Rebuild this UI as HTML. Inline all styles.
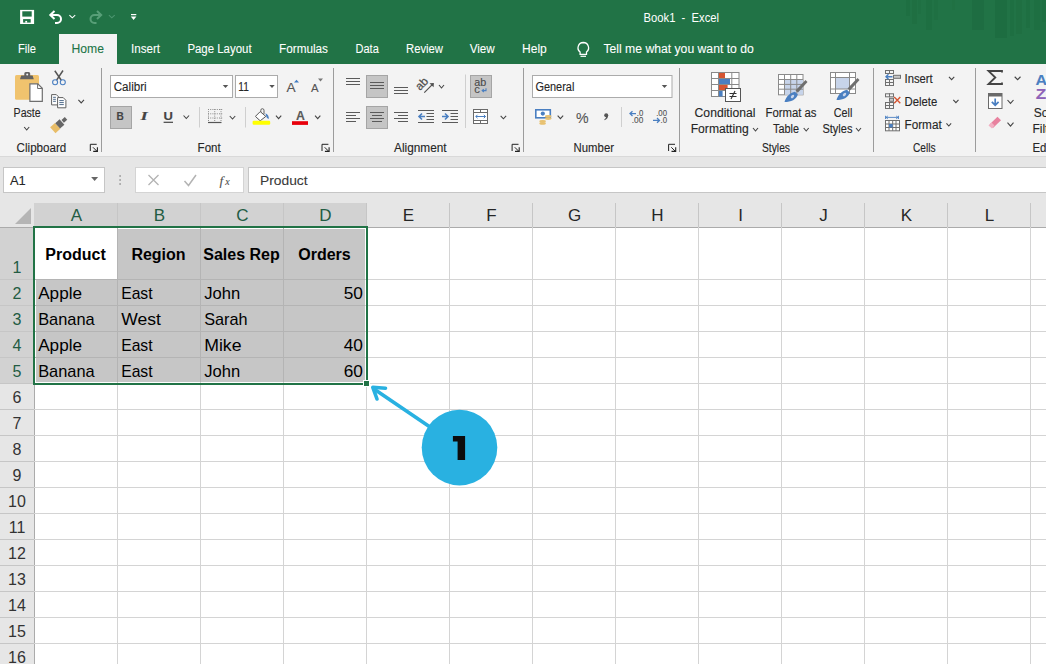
<!DOCTYPE html>
<html><head><meta charset="utf-8"><title>Book1 - Excel</title>
<style>
html,body{margin:0;padding:0;width:1046px;height:664px;overflow:hidden;background:#fff;font-family:"Liberation Sans",sans-serif;}
svg{display:block;}
</style></head>
<body><svg width="1046" height="664" viewBox="0 0 1046 664">
<rect x="0" y="0" width="1046" height="64" fill="#217346" />
<rect x="906" y="0" width="4" height="16" fill="#0d4f2a" opacity="0.1"/>
<rect x="912" y="0" width="5" height="24" fill="#0d4f2a" opacity="0.12"/>
<rect x="918" y="0" width="3" height="14" fill="#0d4f2a" opacity="0.08"/>
<rect x="926" y="0" width="6" height="30" fill="#0d4f2a" opacity="0.1"/>
<rect x="934" y="0" width="4" height="20" fill="#0d4f2a" opacity="0.08"/>
<rect x="952" y="0" width="3" height="10" fill="#0d4f2a" opacity="0.06"/>
<rect x="972" y="0" width="12" height="30" fill="#0d4f2a" opacity="0.14"/>
<rect x="995" y="0" width="12" height="38" fill="#0d4f2a" opacity="0.16"/>
<rect x="1010" y="0" width="4" height="36" fill="#0d4f2a" opacity="0.1"/>
<rect x="1016" y="0" width="6" height="34" fill="#0d4f2a" opacity="0.12"/>
<rect x="1026" y="0" width="4" height="28" fill="#0d4f2a" opacity="0.1"/>
<rect x="1034" y="0" width="6" height="30" fill="#0d4f2a" opacity="0.1"/>
<rect x="1042" y="0" width="4" height="22" fill="#0d4f2a" opacity="0.08"/>
<rect x="20.1" y="9.9" width="14" height="14.1" fill="#fff" />
<rect x="22.3" y="11.3" width="9.4" height="5.3" fill="#217346" />
<rect x="23.1" y="19.1" width="7.6" height="3.5" fill="#217346" />
<rect x="25.3" y="20.9" width="1.8" height="1.8" fill="#fff" />
<path d="M51,15 H57 A4,4 0 0 1 57,23 H55" fill="none" stroke="#fff" stroke-width="2" />
<path d="M54.5,11 L50.3,15 L54.5,19" fill="none" stroke="#fff" stroke-width="2" />
<path d="M69.39999999999999,15.15 L72.3,17.85 L75.2,15.15" fill="none" stroke="#fff" stroke-width="1.1" />
<path d="M100.5,15 H94.5 A4,4 0 0 0 94.5,23 H96.5" fill="none" stroke="#589f78" stroke-width="2" />
<path d="M97,11 L101.2,15 L97,19" fill="none" stroke="#589f78" stroke-width="2" />
<path d="M108.89999999999999,15.15 L111.8,17.85 L114.7,15.15" fill="none" stroke="#4d9670" stroke-width="1.1" />
<line x1="131" y1="14.6" x2="136.3" y2="14.6" stroke="#fff" stroke-width="1.2" />
<path d="M130.79999999999998,16.4 L136.4,16.4 L133.6,20.0 Z" fill="#fff" />
<text x="643.6" y="22.3" font-family="Liberation Sans" font-size="12" fill="#fff" textLength="75.4" lengthAdjust="spacingAndGlyphs" >Book1&#160;&#160;-&#160;&#160;Excel</text>
<rect x="59" y="34" width="58" height="31" fill="#f3f3f3" />
<text x="18" y="53" font-family="Liberation Sans" font-size="12" fill="#fff" stroke="#fff" stroke-width="0.08" textLength="18" lengthAdjust="spacingAndGlyphs" >File</text>
<text x="131" y="53" font-family="Liberation Sans" font-size="12" fill="#fff" stroke="#fff" stroke-width="0.08" textLength="29" lengthAdjust="spacingAndGlyphs" >Insert</text>
<text x="187.4" y="53" font-family="Liberation Sans" font-size="12" fill="#fff" stroke="#fff" stroke-width="0.08" textLength="64.2" lengthAdjust="spacingAndGlyphs" >Page Layout</text>
<text x="279" y="53" font-family="Liberation Sans" font-size="12" fill="#fff" stroke="#fff" stroke-width="0.08" textLength="49" lengthAdjust="spacingAndGlyphs" >Formulas</text>
<text x="355.5" y="53" font-family="Liberation Sans" font-size="12" fill="#fff" stroke="#fff" stroke-width="0.08" textLength="23.3" lengthAdjust="spacingAndGlyphs" >Data</text>
<text x="406" y="53" font-family="Liberation Sans" font-size="12" fill="#fff" stroke="#fff" stroke-width="0.08" textLength="37" lengthAdjust="spacingAndGlyphs" >Review</text>
<text x="469.7" y="53" font-family="Liberation Sans" font-size="12" fill="#fff" stroke="#fff" stroke-width="0.08" textLength="25.1" lengthAdjust="spacingAndGlyphs" >View</text>
<text x="522" y="53" font-family="Liberation Sans" font-size="12" fill="#fff" stroke="#fff" stroke-width="0.08" textLength="24.8" lengthAdjust="spacingAndGlyphs" >Help</text>
<text x="603.4" y="53" font-family="Liberation Sans" font-size="12" fill="#fff" stroke="#fff" stroke-width="0.08" textLength="150.4" lengthAdjust="spacingAndGlyphs" >Tell me what you want to do</text>
<text x="71.5" y="53" font-family="Liberation Sans" font-size="12" fill="#217346" stroke="#217346" stroke-width="0.08" textLength="32.5" lengthAdjust="spacingAndGlyphs" >Home</text>
<path d="M583.3,42.5 a5.3,5.3 0 0 0 -3.2,9.5 v2.4 h6.4 v-2.4 a5.3,5.3 0 0 0 -3.2,-9.5 z" fill="none" stroke="#fff" stroke-width="1.3" />
<line x1="580.5" y1="56.3" x2="586" y2="56.3" stroke="#fff" stroke-width="1.2" />
<rect x="0" y="64" width="1046" height="92" fill="#f3f3f3" />
<line x1="0" y1="156.5" x2="1046" y2="156.5" stroke="#d9d9d9" stroke-width="1" />
<line x1="101.5" y1="68" x2="101.5" y2="152" stroke="#9c9c9c" stroke-width="1" />
<line x1="333.5" y1="68" x2="333.5" y2="152" stroke="#9c9c9c" stroke-width="1" />
<line x1="523.5" y1="68" x2="523.5" y2="152" stroke="#9c9c9c" stroke-width="1" />
<line x1="679.5" y1="68" x2="679.5" y2="152" stroke="#9c9c9c" stroke-width="1" />
<line x1="873.5" y1="68" x2="873.5" y2="152" stroke="#9c9c9c" stroke-width="1" />
<line x1="975.5" y1="68" x2="975.5" y2="152" stroke="#9c9c9c" stroke-width="1" />
<text x="16.6" y="152" font-family="Liberation Sans" font-size="12" fill="#262626" stroke="#262626" stroke-width="0.12" textLength="49.7" lengthAdjust="spacingAndGlyphs" >Clipboard</text>
<text x="197.6" y="152" font-family="Liberation Sans" font-size="12" fill="#262626" stroke="#262626" stroke-width="0.12" textLength="23.1" lengthAdjust="spacingAndGlyphs" >Font</text>
<text x="394" y="152" font-family="Liberation Sans" font-size="12" fill="#262626" stroke="#262626" stroke-width="0.12" textLength="52.6" lengthAdjust="spacingAndGlyphs" >Alignment</text>
<text x="573.6" y="152" font-family="Liberation Sans" font-size="12" fill="#262626" stroke="#262626" stroke-width="0.12" textLength="40.4" lengthAdjust="spacingAndGlyphs" >Number</text>
<text x="762" y="152" font-family="Liberation Sans" font-size="12" fill="#262626" stroke="#262626" stroke-width="0.12" textLength="28" lengthAdjust="spacingAndGlyphs" >Styles</text>
<text x="913" y="152" font-family="Liberation Sans" font-size="12" fill="#262626" stroke="#262626" stroke-width="0.12" textLength="22.6" lengthAdjust="spacingAndGlyphs" >Cells</text>
<text x="1032.4" y="152" font-family="Liberation Sans" font-size="12" fill="#262626" stroke="#262626" stroke-width="0.12" textLength="14" lengthAdjust="spacingAndGlyphs" >Ed</text>
<path d="M90.3,151.0 V144.3 H96.7" fill="none" stroke="#222" stroke-width="1" />
<path d="M93,147.3 L97,151.3" fill="none" stroke="#222" stroke-width="1" />
<path d="M93.2,151.4 H97.4 V147.3" fill="none" stroke="#222" stroke-width="1.1" />
<path d="M322.0,151.0 V144.3 H328.4" fill="none" stroke="#222" stroke-width="1" />
<path d="M324.7,147.3 L328.7,151.3" fill="none" stroke="#222" stroke-width="1" />
<path d="M324.9,151.4 H329.09999999999997 V147.3" fill="none" stroke="#222" stroke-width="1.1" />
<path d="M512.1,151.0 V144.3 H518.5" fill="none" stroke="#222" stroke-width="1" />
<path d="M514.8,147.3 L518.8,151.3" fill="none" stroke="#222" stroke-width="1" />
<path d="M515.0,151.4 H519.2 V147.3" fill="none" stroke="#222" stroke-width="1.1" />
<path d="M668.5999999999999,151.0 V144.3 H675.0" fill="none" stroke="#222" stroke-width="1" />
<path d="M671.3,147.3 L675.3,151.3" fill="none" stroke="#222" stroke-width="1" />
<path d="M671.5,151.4 H675.6999999999999 V147.3" fill="none" stroke="#222" stroke-width="1.1" />
<path d="M16.5,75 H37.5 Q39,75 39,76.5 V99.7 H16.5 Q15,99.7 15,98.2 V76.5 Q15,75 16.5,75 Z" fill="#f0c36e" />
<path d="M20,79.2 L21.2,75.6 H24.3 V73.5 Q24.3,72 25.8,72 H28.7 Q30.2,72 30.2,73.5 V75.6 H32.6 L33.8,79.2 Z" fill="#626262" />
<circle cx="27.2" cy="74.6" r="1" fill="#f3f3f3"/>
<path d="M29.9,83.8 H37.8 L42.3,88.3 V101.3 H29.9 Z" fill="#fff" stroke="#6e6e6e" stroke-width="1.2" />
<path d="M37.6,83.8 V88.5 H42.3" fill="none" stroke="#6e6e6e" stroke-width="1" />
<text x="13.6" y="117" font-family="Liberation Sans" font-size="12" fill="#262626" stroke="#262626" stroke-width="0.12" textLength="27.1" lengthAdjust="spacingAndGlyphs" >Paste</text>
<path d="M24.2,127.0 L26.7,130.0 L29.2,127.0" fill="none" stroke="#444" stroke-width="1.1" />
<path d="M54.8,70.8 L61.3,80.2 M63,70.5 L56.6,80.2" fill="none" stroke="#555" stroke-width="1.5" />
<circle cx="55.1" cy="82.3" r="2.5" fill="none" stroke="#4a7fc1" stroke-width="1.1"/>
<circle cx="62.8" cy="82.3" r="2.5" fill="none" stroke="#4a7fc1" stroke-width="1.1"/>
<path d="M51.6,94.6 H56.3 L58.6,96.9 V104.9 H51.6 Z" fill="#fff" stroke="#606060" stroke-width="1" />
<line x1="53.1" y1="97.3" x2="55.9" y2="97.3" stroke="#4f6b8a" stroke-width="1" />
<line x1="53.1" y1="99.3" x2="55.9" y2="99.3" stroke="#4f6b8a" stroke-width="1" />
<line x1="53.1" y1="101.3" x2="55.9" y2="101.3" stroke="#4f6b8a" stroke-width="1" />
<path d="M57.6,97.6 H63.2 L65.9,100.3 V107.8 H57.6 Z" fill="#fff" stroke="#606060" stroke-width="1" />
<line x1="59.3" y1="100.6" x2="63.8" y2="100.6" stroke="#4f6b8a" stroke-width="1" />
<line x1="59.3" y1="102.6" x2="63.8" y2="102.6" stroke="#4f6b8a" stroke-width="1" />
<line x1="59.3" y1="104.6" x2="63.8" y2="104.6" stroke="#4f6b8a" stroke-width="1" />
<path d="M78.4,99.9 L81.2,102.9 L84.0,99.9" fill="none" stroke="#444" stroke-width="1.1" />
<g transform="translate(59.5 124.2) rotate(-42)">
<rect x="-9" y="-4" width="6.5" height="8" fill="#e8bd68" />
<rect x="-2.5" y="-3.6" width="5.8" height="7.2" fill="#666" />
<rect x="4.3" y="-1.8" width="4.5" height="3.6" fill="#666" />
</g>
<rect x="110.5" y="75.5" width="122" height="22" fill="#fff" stroke="#ababab" stroke-width="1" />
<text x="113.7" y="91" font-family="Liberation Sans" font-size="12" fill="#262626" stroke="#262626" stroke-width="0.12" textLength="33" lengthAdjust="spacingAndGlyphs" >Calibri</text>
<path d="M222.75,85.0 L228.25,85.0 L225.5,88.0 Z" fill="#555" />
<rect x="235.5" y="75.5" width="42" height="22" fill="#fff" stroke="#ababab" stroke-width="1" />
<text x="238.3" y="91" font-family="Liberation Sans" font-size="12" fill="#262626" stroke="#262626" stroke-width="0.12" textLength="10.6" lengthAdjust="spacingAndGlyphs" >11</text>
<path d="M269.25,85.0 L274.75,85.0 L272,88.0 Z" fill="#555" />
<text x="286.5" y="91.5" font-family="Liberation Sans" font-size="12.5" fill="#555" stroke="#555" stroke-width="0.12" textLength="9.1" lengthAdjust="spacingAndGlyphs" >A</text>
<path d="M294,82.5 L296.5,79.8 L299,82.5 Z" fill="#3f7cc4" />
<text x="311" y="91.5" font-family="Liberation Sans" font-size="10.5" fill="#555" stroke="#555" stroke-width="0.12" textLength="7.6" lengthAdjust="spacingAndGlyphs" >A</text>
<path d="M318,78.5 L323,78.5 L320.5,81.5 Z" fill="#777" />
<rect x="110.5" y="106.5" width="21" height="22" fill="#c5c5c5" stroke="#a5a5a5" stroke-width="1" />
<text x="116.6" y="120.4" font-family="Liberation Sans" font-size="11" fill="#444" stroke="#444" stroke-width="0.12" font-weight="bold" textLength="7.3" lengthAdjust="spacingAndGlyphs" >B</text>
<text x="140.5" y="120.4" font-family="Liberation Serif" font-size="12" fill="#444" stroke="#444" stroke-width="0.12" font-weight="bold" font-style="italic" textLength="7.2" lengthAdjust="spacingAndGlyphs" >I</text>
<text x="163.6" y="119.5" font-family="Liberation Sans" font-size="11" fill="#444" stroke="#444" stroke-width="0.12" font-weight="bold" textLength="9.4" lengthAdjust="spacingAndGlyphs" >U</text>
<line x1="163.6" y1="122.3" x2="173" y2="122.3" stroke="#444" stroke-width="1.2" />
<path d="M183.55,115.5 L186.3,118.5 L189.05,115.5" fill="none" stroke="#444" stroke-width="1.1" />
<line x1="199.5" y1="107" x2="199.5" y2="127.5" stroke="#cfcfcf" stroke-width="1" />
<rect x="208.0" y="109.0" width="1" height="1" fill="#8a8a8a" />
<rect x="210.2" y="109.0" width="1" height="1" fill="#8a8a8a" />
<rect x="212.4" y="109.0" width="1" height="1" fill="#8a8a8a" />
<rect x="214.6" y="109.0" width="1" height="1" fill="#8a8a8a" />
<rect x="216.8" y="109.0" width="1" height="1" fill="#8a8a8a" />
<rect x="219.0" y="109.0" width="1" height="1" fill="#8a8a8a" />
<rect x="221.2" y="109.0" width="1" height="1" fill="#8a8a8a" />
<rect x="208.0" y="113.3" width="1" height="1" fill="#8a8a8a" />
<rect x="210.2" y="113.3" width="1" height="1" fill="#8a8a8a" />
<rect x="212.4" y="113.3" width="1" height="1" fill="#8a8a8a" />
<rect x="214.6" y="113.3" width="1" height="1" fill="#8a8a8a" />
<rect x="216.8" y="113.3" width="1" height="1" fill="#8a8a8a" />
<rect x="219.0" y="113.3" width="1" height="1" fill="#8a8a8a" />
<rect x="221.2" y="113.3" width="1" height="1" fill="#8a8a8a" />
<rect x="208.0" y="117.5" width="1" height="1" fill="#8a8a8a" />
<rect x="210.2" y="117.5" width="1" height="1" fill="#8a8a8a" />
<rect x="212.4" y="117.5" width="1" height="1" fill="#8a8a8a" />
<rect x="214.6" y="117.5" width="1" height="1" fill="#8a8a8a" />
<rect x="216.8" y="117.5" width="1" height="1" fill="#8a8a8a" />
<rect x="219.0" y="117.5" width="1" height="1" fill="#8a8a8a" />
<rect x="221.2" y="117.5" width="1" height="1" fill="#8a8a8a" />
<rect x="208.0" y="109.0" width="1" height="1" fill="#8a8a8a" />
<rect x="208.0" y="111.2" width="1" height="1" fill="#8a8a8a" />
<rect x="208.0" y="113.4" width="1" height="1" fill="#8a8a8a" />
<rect x="208.0" y="115.6" width="1" height="1" fill="#8a8a8a" />
<rect x="208.0" y="117.8" width="1" height="1" fill="#8a8a8a" />
<rect x="208.0" y="120.0" width="1" height="1" fill="#8a8a8a" />
<rect x="214.2" y="109.0" width="1" height="1" fill="#8a8a8a" />
<rect x="214.2" y="111.2" width="1" height="1" fill="#8a8a8a" />
<rect x="214.2" y="113.4" width="1" height="1" fill="#8a8a8a" />
<rect x="214.2" y="115.6" width="1" height="1" fill="#8a8a8a" />
<rect x="214.2" y="117.8" width="1" height="1" fill="#8a8a8a" />
<rect x="214.2" y="120.0" width="1" height="1" fill="#8a8a8a" />
<rect x="220.5" y="109.0" width="1" height="1" fill="#8a8a8a" />
<rect x="220.5" y="111.2" width="1" height="1" fill="#8a8a8a" />
<rect x="220.5" y="113.4" width="1" height="1" fill="#8a8a8a" />
<rect x="220.5" y="115.6" width="1" height="1" fill="#8a8a8a" />
<rect x="220.5" y="117.8" width="1" height="1" fill="#8a8a8a" />
<rect x="220.5" y="120.0" width="1" height="1" fill="#8a8a8a" />
<line x1="208" y1="122.5" x2="221.5" y2="122.5" stroke="#555" stroke-width="1.2" />
<path d="M229.75,116.0 L232.5,119.0 L235.25,116.0" fill="none" stroke="#444" stroke-width="1.1" />
<line x1="245.5" y1="107" x2="245.5" y2="127.5" stroke="#cfcfcf" stroke-width="1" />
<path d="M260.8,113.8 V110.3 a1.6,1.6 0 0 1 3.2,0 V114" fill="none" stroke="#606060" stroke-width="1" />
<path d="M255.4,116.4 L260.2,111.6 L265.8,116.4 L260.2,120.8 Z" fill="#fff" stroke="#555" stroke-width="1" />
<path d="M265.4,113.2 q3.8,1.8 3.4,5.8 q-2.4,-0.6 -2.6,-2.8 z" fill="#4a7fc1" />
<rect x="252.6" y="120.8" width="17.6" height="3.9" fill="#ffff00" rx="1.2"/>
<path d="M275.95000000000005,115.7 L278.6,118.7 L281.25,115.7" fill="none" stroke="#444" stroke-width="1.1" />
<text x="295.9" y="120.4" font-family="Liberation Sans" font-size="13" fill="#5a5a5a" stroke="#5a5a5a" stroke-width="0.12" font-weight="bold" textLength="8.9" lengthAdjust="spacingAndGlyphs" >A</text>
<rect x="292" y="121.2" width="16" height="3.7" fill="#e8000b" />
<path d="M315.05,115.7 L317.7,118.7 L320.34999999999997,115.7" fill="none" stroke="#444" stroke-width="1.1" />
<line x1="346" y1="78.5" x2="360" y2="78.5" stroke="#5a5a5a" stroke-width="1" />
<line x1="346" y1="81.5" x2="360" y2="81.5" stroke="#5a5a5a" stroke-width="1" />
<line x1="346" y1="84.5" x2="360" y2="84.5" stroke="#5a5a5a" stroke-width="1" />
<rect x="366.5" y="75.5" width="21" height="22" fill="#c5c5c5" stroke="#a5a5a5" stroke-width="1" />
<line x1="370" y1="82.5" x2="384" y2="82.5" stroke="#5a5a5a" stroke-width="1" />
<line x1="370" y1="85.5" x2="384" y2="85.5" stroke="#5a5a5a" stroke-width="1" />
<line x1="370" y1="88.5" x2="384" y2="88.5" stroke="#5a5a5a" stroke-width="1" />
<line x1="394" y1="87.5" x2="408" y2="87.5" stroke="#5a5a5a" stroke-width="1" />
<line x1="394" y1="90.5" x2="408" y2="90.5" stroke="#5a5a5a" stroke-width="1" />
<line x1="394" y1="93.5" x2="408" y2="93.5" stroke="#5a5a5a" stroke-width="1" />
<text x="-6.5" y="0" font-family="Liberation Sans" font-size="11.5" fill="#505050" transform="translate(424.6 86.4) rotate(-46)" stroke="#505050" stroke-width="0.25">ab</text>
<path d="M424.3,92.6 L432,84.9" fill="none" stroke="#505050" stroke-width="1.2" />
<path d="M429.5,83.2 L433.9,82.9 L433.6,87.3 Z" fill="#505050" />
<path d="M439.0,85.0 L441.5,88.0 L444.0,85.0" fill="none" stroke="#444" stroke-width="1.1" />
<line x1="465.5" y1="74.5" x2="465.5" y2="128" stroke="#cfcfcf" stroke-width="1" />
<rect x="470.5" y="75.5" width="21" height="22" fill="#c5c5c5" stroke="#a5a5a5" stroke-width="1" />
<text x="474.3" y="85.6" font-family="Liberation Sans" font-size="10.5" fill="#4a4a4a" stroke="#4a4a4a" stroke-width="0.12" textLength="12" lengthAdjust="spacingAndGlyphs" >ab</text>
<text x="474.3" y="93.2" font-family="Liberation Sans" font-size="10.5" fill="#4a4a4a" stroke="#4a4a4a" stroke-width="0.12" textLength="5.6" lengthAdjust="spacingAndGlyphs" >c</text>
<path d="M486,88.3 V90.6 H482.3 M483.8,89.2 L482.2,90.6 L483.8,92" fill="none" stroke="#4a7fc1" stroke-width="1.1" />
<line x1="346" y1="112.5" x2="360" y2="112.5" stroke="#5a5a5a" stroke-width="1" />
<line x1="346" y1="115.5" x2="356" y2="115.5" stroke="#5a5a5a" stroke-width="1" />
<line x1="346" y1="118.5" x2="360" y2="118.5" stroke="#5a5a5a" stroke-width="1" />
<line x1="346" y1="121.5" x2="356" y2="121.5" stroke="#5a5a5a" stroke-width="1" />
<rect x="366.5" y="106.5" width="21" height="22" fill="#c5c5c5" stroke="#a5a5a5" stroke-width="1" />
<line x1="370" y1="112.5" x2="384" y2="112.5" stroke="#5a5a5a" stroke-width="1" />
<line x1="372" y1="115.5" x2="382" y2="115.5" stroke="#5a5a5a" stroke-width="1" />
<line x1="370" y1="118.5" x2="384" y2="118.5" stroke="#5a5a5a" stroke-width="1" />
<line x1="372" y1="121.5" x2="382" y2="121.5" stroke="#5a5a5a" stroke-width="1" />
<line x1="394" y1="112.5" x2="408" y2="112.5" stroke="#5a5a5a" stroke-width="1" />
<line x1="398" y1="115.5" x2="408" y2="115.5" stroke="#5a5a5a" stroke-width="1" />
<line x1="394" y1="118.5" x2="408" y2="118.5" stroke="#5a5a5a" stroke-width="1" />
<line x1="398" y1="121.5" x2="408" y2="121.5" stroke="#5a5a5a" stroke-width="1" />
<line x1="418" y1="110.5" x2="434" y2="110.5" stroke="#5a5a5a" stroke-width="1" />
<line x1="426.5" y1="113.5" x2="434" y2="113.5" stroke="#5a5a5a" stroke-width="1" />
<line x1="426.5" y1="116.5" x2="434" y2="116.5" stroke="#5a5a5a" stroke-width="1" />
<line x1="426.5" y1="119.5" x2="434" y2="119.5" stroke="#5a5a5a" stroke-width="1" />
<line x1="418" y1="122.5" x2="434" y2="122.5" stroke="#5a5a5a" stroke-width="1" />
<path d="M425,116.5 H419 M422,113.5 L419,116.5 L422,119.5" fill="none" stroke="#4a7fc1" stroke-width="1.6" />
<line x1="442" y1="110.5" x2="458" y2="110.5" stroke="#5a5a5a" stroke-width="1" />
<line x1="450.5" y1="113.5" x2="458" y2="113.5" stroke="#5a5a5a" stroke-width="1" />
<line x1="450.5" y1="116.5" x2="458" y2="116.5" stroke="#5a5a5a" stroke-width="1" />
<line x1="450.5" y1="119.5" x2="458" y2="119.5" stroke="#5a5a5a" stroke-width="1" />
<line x1="442" y1="122.5" x2="458" y2="122.5" stroke="#5a5a5a" stroke-width="1" />
<path d="M442,116.5 H448 M445,113.5 L448,116.5 L445,119.5" fill="none" stroke="#4a7fc1" stroke-width="1.6" />
<rect x="473.5" y="109.5" width="14" height="14" fill="#fff" stroke="#6a6a6a" stroke-width="1" />
<line x1="473.5" y1="112.5" x2="487.5" y2="112.5" stroke="#6a6a6a" stroke-width="1" />
<line x1="473.5" y1="120.5" x2="487.5" y2="120.5" stroke="#6a6a6a" stroke-width="1" />
<line x1="480.5" y1="109.5" x2="480.5" y2="112.5" stroke="#6a6a6a" stroke-width="1" />
<line x1="480.5" y1="120.5" x2="480.5" y2="123.5" stroke="#6a6a6a" stroke-width="1" />
<path d="M475.8,116.5 H485.5 M477.5,114.8 L475.8,116.5 L477.5,118.2 M483.8,114.8 L485.5,116.5 L483.8,118.2" fill="none" stroke="#4a7fc1" stroke-width="1" />
<path d="M500.65,115.8 L503.4,118.8 L506.15,115.8" fill="none" stroke="#444" stroke-width="1.1" />
<rect x="532.5" y="75.5" width="139.5" height="22" fill="#fff" stroke="#ababab" stroke-width="1" />
<text x="535.4" y="90.8" font-family="Liberation Sans" font-size="12" fill="#262626" stroke="#262626" stroke-width="0.12" textLength="39" lengthAdjust="spacingAndGlyphs" >General</text>
<path d="M661.75,85.0 L667.25,85.0 L664.5,88.0 Z" fill="#555" />
<rect x="535.8" y="109.8" width="14.5" height="8" fill="#fff" stroke="#4a7fc1" stroke-width="1.6" />
<circle cx="542.8" cy="113.6" r="2.1" fill="#4a7fc1"/>
<ellipse cx="548.2" cy="116.3" rx="3.3" ry="1.3" fill="#e8c170"/>
<ellipse cx="548.2" cy="118.6" rx="3.3" ry="1.3" fill="#e8c170"/>
<ellipse cx="542.6" cy="121.3" rx="3.3" ry="1.3" fill="#e8c170"/>
<ellipse cx="542.6" cy="123.4" rx="3.3" ry="1.3" fill="#e8c170"/>
<path d="M557.65,115.7 L560.4,118.7 L563.15,115.7" fill="none" stroke="#444" stroke-width="1.1" />
<text x="576" y="123" font-family="Liberation Sans" font-size="15.5" fill="#555" stroke="#555" stroke-width="0.12" textLength="12.6" lengthAdjust="spacingAndGlyphs" >%</text>
<circle cx="606.2" cy="115.3" r="2" fill="#555"/>
<path d="M607.9,115.6 Q608.4,118.6 604.6,120.2 L604.3,119.5 Q606.3,118.3 606.2,116.6 Z" fill="#555" />
<line x1="621.5" y1="107" x2="621.5" y2="127" stroke="#cfcfcf" stroke-width="1" />
<text x="636.8" y="115.8" font-family="Liberation Sans" font-size="8.5" fill="#555" stroke="#555" stroke-width="0.12" textLength="6.5" lengthAdjust="spacingAndGlyphs" >.0</text>
<text x="631.8" y="123" font-family="Liberation Sans" font-size="8.5" fill="#555" stroke="#555" stroke-width="0.12" textLength="11.5" lengthAdjust="spacingAndGlyphs" >.00</text>
<path d="M636,113.6 H630 M632.5,111.2 L630,113.6 L632.5,116" fill="none" stroke="#4a7fc1" stroke-width="1.3" />
<text x="656.2" y="115.8" font-family="Liberation Sans" font-size="8.5" fill="#555" stroke="#555" stroke-width="0.12" textLength="10.8" lengthAdjust="spacingAndGlyphs" >.00</text>
<text x="660.5" y="123" font-family="Liberation Sans" font-size="8.5" fill="#555" stroke="#555" stroke-width="0.12" textLength="6.5" lengthAdjust="spacingAndGlyphs" >.0</text>
<path d="M653,120.4 H659.5 M657,118 L659.5,120.4 L657,122.8" fill="none" stroke="#4a7fc1" stroke-width="1.3" />
<rect x="711.5" y="72.5" width="27.5" height="24" fill="#fff" stroke="#8a8a8a" stroke-width="1" />
<line x1="711.5" y1="78.5" x2="739" y2="78.5" stroke="#8a8a8a" stroke-width="1" />
<line x1="711.5" y1="84.5" x2="739" y2="84.5" stroke="#8a8a8a" stroke-width="1" />
<line x1="711.5" y1="90.5" x2="739" y2="90.5" stroke="#8a8a8a" stroke-width="1" />
<line x1="718.5" y1="72.5" x2="718.5" y2="96.5" stroke="#8a8a8a" stroke-width="1" />
<line x1="731.8" y1="72.5" x2="731.8" y2="96.5" stroke="#8a8a8a" stroke-width="1" />
<rect x="719" y="73" width="6" height="5" fill="#d65532" />
<rect x="719" y="79" width="11" height="5" fill="#4a7fc1" />
<rect x="719" y="85" width="8.6" height="5" fill="#d65532" />
<rect x="719" y="91" width="3.6" height="5.5" fill="#4a7fc1" />
<rect x="725.5" y="88.5" width="15" height="13" fill="#fff" stroke="#555" stroke-width="1" />
<path d="M729.5,93.5 H736.5 M729.5,96.5 H736.5 M735,91 L731,99" fill="none" stroke="#333" stroke-width="1.1" />
<text x="694.6" y="117" font-family="Liberation Sans" font-size="12" fill="#262626" stroke="#262626" stroke-width="0.12" textLength="60.8" lengthAdjust="spacingAndGlyphs" >Conditional</text>
<text x="690.7" y="133" font-family="Liberation Sans" font-size="12" fill="#262626" stroke="#262626" stroke-width="0.12" textLength="58" lengthAdjust="spacingAndGlyphs" >Formatting</text>
<path d="M753.0,128.0 L755.5,131.0 L758.0,128.0" fill="none" stroke="#444" stroke-width="1.1" />
<rect x="778.5" y="74.5" width="24.5" height="20.3" fill="#fff" stroke="#8a8a8a" stroke-width="1" />
<rect x="784.5" y="79.5" width="18.5" height="15.3" fill="#c7d4ea" />
<line x1="778.5" y1="79.5" x2="803" y2="79.5" stroke="#8a8a8a" stroke-width="1" />
<line x1="778.5" y1="84.4" x2="803" y2="84.4" stroke="#8a8a8a" stroke-width="1" />
<line x1="778.5" y1="89.2" x2="803" y2="89.2" stroke="#8a8a8a" stroke-width="1" />
<line x1="784.5" y1="74.5" x2="784.5" y2="94.8" stroke="#8a8a8a" stroke-width="1" />
<line x1="790.7" y1="74.5" x2="790.7" y2="94.8" stroke="#8a8a8a" stroke-width="1" />
<line x1="796.8" y1="74.5" x2="796.8" y2="94.8" stroke="#8a8a8a" stroke-width="1" />
<path d="M795.5,90.5 L805.5,80 L807.5,82 L798,92.5 Z" fill="#6e6e6e" />
<path d="M784.5,102 C786,96.5 790,92.8 795,91.8 L797.8,94.5 C796.5,99.5 791,102 784.5,102 Z" fill="#4a7fc1" />
<ellipse cx="792.5" cy="96.5" rx="1.3" ry="2" fill="#c7d4ea" transform="rotate(45 792.5 96.5)"/>
<text x="765.5" y="117" font-family="Liberation Sans" font-size="12" fill="#262626" stroke="#262626" stroke-width="0.12" textLength="51" lengthAdjust="spacingAndGlyphs" >Format as</text>
<text x="773" y="133" font-family="Liberation Sans" font-size="12" fill="#262626" stroke="#262626" stroke-width="0.12" textLength="26" lengthAdjust="spacingAndGlyphs" >Table</text>
<path d="M803.7,128.0 L806.2,131.0 L808.7,128.0" fill="none" stroke="#444" stroke-width="1.1" />
<rect x="830.5" y="72.5" width="25" height="21" fill="#fff" stroke="#8a8a8a" stroke-width="1" />
<rect x="835.5" y="77.5" width="14" height="11.5" fill="#c7d4ea" />
<line x1="830.5" y1="77.5" x2="855.5" y2="77.5" stroke="#8a8a8a" stroke-width="1" />
<line x1="830.5" y1="89" x2="855.5" y2="89" stroke="#8a8a8a" stroke-width="1" />
<line x1="835.5" y1="72.5" x2="835.5" y2="93.5" stroke="#8a8a8a" stroke-width="1" />
<line x1="849.5" y1="72.5" x2="849.5" y2="93.5" stroke="#8a8a8a" stroke-width="1" />
<path d="M847.5,88.5 L857.5,78 L859.5,80 L850,90.5 Z" fill="#6e6e6e" />
<path d="M836.5,100 C838,94.5 842,90.8 847,89.8 L849.8,92.5 C848.5,97.5 843,100 836.5,100 Z" fill="#4a7fc1" />
<ellipse cx="844.5" cy="94.5" rx="1.3" ry="2" fill="#c7d4ea" transform="rotate(45 844.5 94.5)"/>
<text x="833.8" y="117" font-family="Liberation Sans" font-size="12" fill="#262626" stroke="#262626" stroke-width="0.12" textLength="18.6" lengthAdjust="spacingAndGlyphs" >Cell</text>
<text x="822.4" y="133" font-family="Liberation Sans" font-size="12" fill="#262626" stroke="#262626" stroke-width="0.12" textLength="30" lengthAdjust="spacingAndGlyphs" >Styles</text>
<path d="M856.0,128.0 L858.5,131.0 L861.0,128.0" fill="none" stroke="#444" stroke-width="1.1" />
<rect x="885.5" y="70.5" width="4" height="3" fill="none" stroke="#707070" stroke-width="1" />
<rect x="889.5" y="70.5" width="4" height="3" fill="none" stroke="#707070" stroke-width="1" />
<rect x="885.5" y="79.5" width="4" height="3" fill="none" stroke="#707070" stroke-width="1" />
<rect x="889.5" y="79.5" width="4" height="3" fill="none" stroke="#707070" stroke-width="1" />
<rect x="885.5" y="82.5" width="4" height="3" fill="none" stroke="#707070" stroke-width="1" />
<rect x="889.5" y="82.5" width="4" height="3" fill="none" stroke="#707070" stroke-width="1" />
<rect x="893.5" y="75.3" width="7" height="3" fill="#c8c8c8" stroke="#707070" stroke-width="1" />
<path d="M892.5,76.8 H886 M888.5,74.3 L886,76.8 L888.5,79.3" fill="none" stroke="#4a7fc1" stroke-width="1.4" />
<text x="904.5" y="82.9" font-family="Liberation Sans" font-size="12" fill="#262626" stroke="#262626" stroke-width="0.12" textLength="28.2" lengthAdjust="spacingAndGlyphs" >Insert</text>
<path d="M948.95,76.95 L951.6,79.64999999999999 L954.25,76.95" fill="none" stroke="#444" stroke-width="1.1" />
<rect x="885.5" y="93.8" width="4" height="3" fill="none" stroke="#707070" stroke-width="1" />
<rect x="889.5" y="93.8" width="4" height="3" fill="none" stroke="#707070" stroke-width="1" />
<rect x="889.5" y="98.3" width="4" height="3" fill="#c8c8c8" stroke="#707070" stroke-width="1" />
<rect x="885.5" y="102.5" width="4" height="3" fill="none" stroke="#707070" stroke-width="1" />
<rect x="889.5" y="102.5" width="4" height="3" fill="none" stroke="#707070" stroke-width="1" />
<rect x="885.5" y="105.5" width="4" height="3" fill="none" stroke="#707070" stroke-width="1" />
<rect x="889.5" y="105.5" width="4" height="3" fill="none" stroke="#707070" stroke-width="1" />
<path d="M894.2,97 L900.3,103.2 M900.3,97 L894.2,103.2" fill="none" stroke="#d65532" stroke-width="1.4" />
<text x="904.5" y="105.5" font-family="Liberation Sans" font-size="12" fill="#262626" stroke="#262626" stroke-width="0.12" textLength="32.8" lengthAdjust="spacingAndGlyphs" >Delete</text>
<path d="M953.3,99.89999999999999 L955.9,102.7 L958.5,99.89999999999999" fill="none" stroke="#444" stroke-width="1.1" />
<rect x="885.5" y="120.5" width="14" height="10.3" fill="#fff" stroke="#707070" stroke-width="1" />
<line x1="885.5" y1="124" x2="899.5" y2="124" stroke="#707070" stroke-width="1" />
<line x1="885.5" y1="127.5" x2="899.5" y2="127.5" stroke="#707070" stroke-width="1" />
<line x1="889" y1="120.5" x2="889" y2="130.8" stroke="#707070" stroke-width="1" />
<line x1="892.7" y1="120.5" x2="892.7" y2="130.8" stroke="#707070" stroke-width="1" />
<line x1="896" y1="120.5" x2="896" y2="130.8" stroke="#707070" stroke-width="1" />
<rect x="889" y="124" width="3.7" height="3.5" fill="#4a7fc1" />
<path d="M886,117.4 H898 M887.8,116 L886,117.4 L887.8,118.8 M896.2,116 L898,117.4 L896.2,118.8 M885.5,115.8 V119 M898.5,115.8 V119" fill="none" stroke="#4a7fc1" stroke-width="0.9" />
<text x="904.5" y="128.5" font-family="Liberation Sans" font-size="12" fill="#262626" stroke="#262626" stroke-width="0.12" textLength="37.2" lengthAdjust="spacingAndGlyphs" >Format</text>
<path d="M946.4499999999999,123.4 L948.8,126.0 L951.15,123.4" fill="none" stroke="#444" stroke-width="1.1" />
<path d="M1002,72.5 V71 H988.5 L995.3,77.5 L988.5,84 H1002 V82.5" fill="none" stroke="#444" stroke-width="1.8" stroke-linejoin="miter"/>
<path d="M1014.7,76.75 L1017.6,79.65 L1020.5,76.75" fill="none" stroke="#444" stroke-width="1.1" />
<rect x="988.5" y="93.5" width="13.5" height="15" fill="#fff" stroke="#6a6a6a" stroke-width="1" />
<rect x="988.5" y="93.5" width="13.5" height="3" fill="#6a6a6a" />
<path d="M995.2,98.5 V105 M991.8,101.8 L995.2,105.2 L998.6,101.8" fill="none" stroke="#4a7fc1" stroke-width="1.7" />
<path d="M1007.5,100.0 L1010.5,103.4 L1013.5,100.0" fill="none" stroke="#444" stroke-width="1.1" />
<path d="M989.5,124.5 L997.5,116.8 L1001,120.3 L993,128 Z" fill="#e8829f" />
<path d="M988.5,125.5 L991.5,122.5 L994.5,125.5 L992,128.5 Z" fill="#f2b0c3" />
<path d="M1007.5,122.7 L1010.5,126.10000000000001 L1013.5,122.7" fill="none" stroke="#444" stroke-width="1.1" />
<text x="1035.4" y="85" font-family="Liberation Sans" font-size="15" fill="#4a7fc1" stroke="#4a7fc1" stroke-width="0.12" font-weight="bold" textLength="11.5" lengthAdjust="spacingAndGlyphs" >A</text>
<text x="1035.8" y="98.7" font-family="Liberation Sans" font-size="15" fill="#8e62b8" stroke="#8e62b8" stroke-width="0.12" font-weight="bold" textLength="10.5" lengthAdjust="spacingAndGlyphs" >Z</text>
<text x="1033.8" y="116.8" font-family="Liberation Sans" font-size="12" fill="#262626" stroke="#262626" stroke-width="0.12" >So</text>
<text x="1032.4" y="132.7" font-family="Liberation Sans" font-size="12" fill="#262626" stroke="#262626" stroke-width="0.12" >Filt</text>
<rect x="0" y="157" width="1046" height="46" fill="#e6e6e6" />
<rect x="3.5" y="167.5" width="101" height="25" fill="#fff" stroke="#c6c6c6" stroke-width="1" />
<text x="10" y="184.8" font-family="Liberation Sans" font-size="12.5" fill="#262626" stroke="#262626" stroke-width="0.1" textLength="15.8" lengthAdjust="spacingAndGlyphs" >A1</text>
<path d="M91.1,177.0 L98.1,177.0 L94.6,181.0 Z" fill="#666" />
<rect x="119.3" y="175.2" width="1.6" height="1.6" fill="#999" />
<rect x="119.3" y="179.2" width="1.6" height="1.6" fill="#999" />
<rect x="119.3" y="183.2" width="1.6" height="1.6" fill="#999" />
<rect x="135.5" y="167.5" width="108" height="25" fill="#fff" stroke="#d4d4d4" stroke-width="1" />
<path d="M148.5,175 L158.5,185 M158.5,175 L148.5,185" fill="none" stroke="#b3b3b3" stroke-width="1.3" />
<path d="M184.5,181 L188.5,185.5 L196,175" fill="none" stroke="#b3b3b3" stroke-width="1.5" />
<text x="219.5" y="185" font-family="Liberation Serif" font-size="13.5" fill="#505050" stroke="#505050" stroke-width="0.1" font-style="italic" >f</text>
<text x="225.2" y="185" font-family="Liberation Serif" font-size="10" fill="#505050" stroke="#505050" stroke-width="0.1" font-style="italic" >x</text>
<rect x="248.5" y="167.5" width="800" height="25" fill="#fff" stroke="#c6c6c6" stroke-width="1" />
<text x="260" y="184.8" font-family="Liberation Sans" font-size="12.5" fill="#3a3a3a" stroke="#3a3a3a" stroke-width="0.1" textLength="47.6" lengthAdjust="spacingAndGlyphs" >Product</text>
<rect x="0" y="203" width="1046" height="24" fill="#e6e6e6" />
<rect x="34" y="203" width="332" height="24" fill="#d2d2d2" />
<rect x="0" y="227" width="34" height="437" fill="#e6e6e6" />
<rect x="0" y="227" width="34" height="156" fill="#d2d2d2" />
<path d="M31,208 L31,224 L15,224 Z" fill="#b5b5b5" />
<rect x="34" y="227" width="1012" height="437" fill="#fff" />
<line x1="117.5" y1="203" x2="117.5" y2="227" stroke="#c6c6c6" stroke-width="1" />
<line x1="200.5" y1="203" x2="200.5" y2="227" stroke="#c6c6c6" stroke-width="1" />
<line x1="283.5" y1="203" x2="283.5" y2="227" stroke="#c6c6c6" stroke-width="1" />
<line x1="366.5" y1="203" x2="366.5" y2="227" stroke="#c6c6c6" stroke-width="1" />
<line x1="449.5" y1="203" x2="449.5" y2="227" stroke="#c6c6c6" stroke-width="1" />
<line x1="532.5" y1="203" x2="532.5" y2="227" stroke="#c6c6c6" stroke-width="1" />
<line x1="615.5" y1="203" x2="615.5" y2="227" stroke="#c6c6c6" stroke-width="1" />
<line x1="698.5" y1="203" x2="698.5" y2="227" stroke="#c6c6c6" stroke-width="1" />
<line x1="781.5" y1="203" x2="781.5" y2="227" stroke="#c6c6c6" stroke-width="1" />
<line x1="864.5" y1="203" x2="864.5" y2="227" stroke="#c6c6c6" stroke-width="1" />
<line x1="947.5" y1="203" x2="947.5" y2="227" stroke="#c6c6c6" stroke-width="1" />
<line x1="1030.5" y1="203" x2="1030.5" y2="227" stroke="#c6c6c6" stroke-width="1" />
<line x1="0" y1="227.5" x2="1046" y2="227.5" stroke="#ababab" stroke-width="1" />
<line x1="0" y1="279.5" x2="34" y2="279.5" stroke="#c6c6c6" stroke-width="1" />
<line x1="0" y1="305.5" x2="34" y2="305.5" stroke="#c6c6c6" stroke-width="1" />
<line x1="0" y1="331.5" x2="34" y2="331.5" stroke="#c6c6c6" stroke-width="1" />
<line x1="0" y1="357.5" x2="34" y2="357.5" stroke="#c6c6c6" stroke-width="1" />
<line x1="0" y1="383.5" x2="34" y2="383.5" stroke="#c6c6c6" stroke-width="1" />
<line x1="0" y1="409.5" x2="34" y2="409.5" stroke="#c6c6c6" stroke-width="1" />
<line x1="0" y1="435.5" x2="34" y2="435.5" stroke="#c6c6c6" stroke-width="1" />
<line x1="0" y1="461.5" x2="34" y2="461.5" stroke="#c6c6c6" stroke-width="1" />
<line x1="0" y1="487.5" x2="34" y2="487.5" stroke="#c6c6c6" stroke-width="1" />
<line x1="0" y1="513.5" x2="34" y2="513.5" stroke="#c6c6c6" stroke-width="1" />
<line x1="0" y1="539.5" x2="34" y2="539.5" stroke="#c6c6c6" stroke-width="1" />
<line x1="0" y1="565.5" x2="34" y2="565.5" stroke="#c6c6c6" stroke-width="1" />
<line x1="0" y1="591.5" x2="34" y2="591.5" stroke="#c6c6c6" stroke-width="1" />
<line x1="0" y1="617.5" x2="34" y2="617.5" stroke="#c6c6c6" stroke-width="1" />
<line x1="0" y1="643.5" x2="34" y2="643.5" stroke="#c6c6c6" stroke-width="1" />
<line x1="0" y1="669.5" x2="34" y2="669.5" stroke="#c6c6c6" stroke-width="1" />
<line x1="34.5" y1="227" x2="34.5" y2="664" stroke="#ababab" stroke-width="1" />
<rect x="36" y="229" width="329" height="153" fill="#c6c6c6" />
<rect x="35" y="228" width="82" height="51" fill="#fff" />
<line x1="117.5" y1="227" x2="117.5" y2="664" stroke="#d4d4d4" stroke-width="1" />
<line x1="200.5" y1="227" x2="200.5" y2="664" stroke="#d4d4d4" stroke-width="1" />
<line x1="283.5" y1="227" x2="283.5" y2="664" stroke="#d4d4d4" stroke-width="1" />
<line x1="366.5" y1="227" x2="366.5" y2="664" stroke="#d4d4d4" stroke-width="1" />
<line x1="449.5" y1="227" x2="449.5" y2="664" stroke="#d4d4d4" stroke-width="1" />
<line x1="532.5" y1="227" x2="532.5" y2="664" stroke="#d4d4d4" stroke-width="1" />
<line x1="615.5" y1="227" x2="615.5" y2="664" stroke="#d4d4d4" stroke-width="1" />
<line x1="698.5" y1="227" x2="698.5" y2="664" stroke="#d4d4d4" stroke-width="1" />
<line x1="781.5" y1="227" x2="781.5" y2="664" stroke="#d4d4d4" stroke-width="1" />
<line x1="864.5" y1="227" x2="864.5" y2="664" stroke="#d4d4d4" stroke-width="1" />
<line x1="947.5" y1="227" x2="947.5" y2="664" stroke="#d4d4d4" stroke-width="1" />
<line x1="1030.5" y1="227" x2="1030.5" y2="664" stroke="#d4d4d4" stroke-width="1" />
<line x1="34" y1="279.5" x2="1046" y2="279.5" stroke="#d4d4d4" stroke-width="1" />
<line x1="34" y1="305.5" x2="1046" y2="305.5" stroke="#d4d4d4" stroke-width="1" />
<line x1="34" y1="331.5" x2="1046" y2="331.5" stroke="#d4d4d4" stroke-width="1" />
<line x1="34" y1="357.5" x2="1046" y2="357.5" stroke="#d4d4d4" stroke-width="1" />
<line x1="34" y1="383.5" x2="1046" y2="383.5" stroke="#d4d4d4" stroke-width="1" />
<line x1="34" y1="409.5" x2="1046" y2="409.5" stroke="#d4d4d4" stroke-width="1" />
<line x1="34" y1="435.5" x2="1046" y2="435.5" stroke="#d4d4d4" stroke-width="1" />
<line x1="34" y1="461.5" x2="1046" y2="461.5" stroke="#d4d4d4" stroke-width="1" />
<line x1="34" y1="487.5" x2="1046" y2="487.5" stroke="#d4d4d4" stroke-width="1" />
<line x1="34" y1="513.5" x2="1046" y2="513.5" stroke="#d4d4d4" stroke-width="1" />
<line x1="34" y1="539.5" x2="1046" y2="539.5" stroke="#d4d4d4" stroke-width="1" />
<line x1="34" y1="565.5" x2="1046" y2="565.5" stroke="#d4d4d4" stroke-width="1" />
<line x1="34" y1="591.5" x2="1046" y2="591.5" stroke="#d4d4d4" stroke-width="1" />
<line x1="34" y1="617.5" x2="1046" y2="617.5" stroke="#d4d4d4" stroke-width="1" />
<line x1="34" y1="643.5" x2="1046" y2="643.5" stroke="#d4d4d4" stroke-width="1" />
<line x1="34" y1="669.5" x2="1046" y2="669.5" stroke="#d4d4d4" stroke-width="1" />
<line x1="117.5" y1="228" x2="117.5" y2="382" stroke="#b4b4b4" stroke-width="1" />
<line x1="200.5" y1="228" x2="200.5" y2="382" stroke="#b4b4b4" stroke-width="1" />
<line x1="283.5" y1="228" x2="283.5" y2="382" stroke="#b4b4b4" stroke-width="1" />
<line x1="35" y1="279.5" x2="365" y2="279.5" stroke="#b4b4b4" stroke-width="1" />
<line x1="35" y1="305.5" x2="365" y2="305.5" stroke="#b4b4b4" stroke-width="1" />
<line x1="35" y1="331.5" x2="365" y2="331.5" stroke="#b4b4b4" stroke-width="1" />
<line x1="35" y1="357.5" x2="365" y2="357.5" stroke="#b4b4b4" stroke-width="1" />
<rect x="35" y="228" width="82" height="51" fill="#fff" />
<path d="M34,227 H367 V384 H34 Z" fill="none" stroke="#217346" stroke-width="2" />
<rect x="363.5" y="380.5" width="6" height="6" fill="#217346" stroke="#fff" stroke-width="1" />
<text x="76.5" y="220.8" font-family="Liberation Sans" font-size="17" fill="#235c43" text-anchor="middle" >A</text>
<text x="159.5" y="220.8" font-family="Liberation Sans" font-size="17" fill="#235c43" text-anchor="middle" >B</text>
<text x="242.5" y="220.8" font-family="Liberation Sans" font-size="17" fill="#235c43" text-anchor="middle" >C</text>
<text x="325.5" y="220.8" font-family="Liberation Sans" font-size="17" fill="#235c43" text-anchor="middle" >D</text>
<text x="408.5" y="220.8" font-family="Liberation Sans" font-size="17" fill="#262626" text-anchor="middle" >E</text>
<text x="491.5" y="220.8" font-family="Liberation Sans" font-size="17" fill="#262626" text-anchor="middle" >F</text>
<text x="574.5" y="220.8" font-family="Liberation Sans" font-size="17" fill="#262626" text-anchor="middle" >G</text>
<text x="657.5" y="220.8" font-family="Liberation Sans" font-size="17" fill="#262626" text-anchor="middle" >H</text>
<text x="740.5" y="220.8" font-family="Liberation Sans" font-size="17" fill="#262626" text-anchor="middle" >I</text>
<text x="823.5" y="220.8" font-family="Liberation Sans" font-size="17" fill="#262626" text-anchor="middle" >J</text>
<text x="906.5" y="220.8" font-family="Liberation Sans" font-size="17" fill="#262626" text-anchor="middle" >K</text>
<text x="989.5" y="220.8" font-family="Liberation Sans" font-size="17" fill="#262626" text-anchor="middle" >L</text>
<text x="17" y="272.6" font-family="Liberation Sans" font-size="16" fill="#235c43" text-anchor="middle" >1</text>
<text x="17" y="299" font-family="Liberation Sans" font-size="16" fill="#235c43" text-anchor="middle" >2</text>
<text x="17" y="325" font-family="Liberation Sans" font-size="16" fill="#235c43" text-anchor="middle" >3</text>
<text x="17" y="351" font-family="Liberation Sans" font-size="16" fill="#235c43" text-anchor="middle" >4</text>
<text x="17" y="377" font-family="Liberation Sans" font-size="16" fill="#235c43" text-anchor="middle" >5</text>
<text x="17" y="403" font-family="Liberation Sans" font-size="16" fill="#333" text-anchor="middle" >6</text>
<text x="17" y="429" font-family="Liberation Sans" font-size="16" fill="#333" text-anchor="middle" >7</text>
<text x="17" y="455" font-family="Liberation Sans" font-size="16" fill="#333" text-anchor="middle" >8</text>
<text x="17" y="481" font-family="Liberation Sans" font-size="16" fill="#333" text-anchor="middle" >9</text>
<text x="17" y="507" font-family="Liberation Sans" font-size="16" fill="#333" text-anchor="middle" >10</text>
<text x="17" y="533" font-family="Liberation Sans" font-size="16" fill="#333" text-anchor="middle" >11</text>
<text x="17" y="559" font-family="Liberation Sans" font-size="16" fill="#333" text-anchor="middle" >12</text>
<text x="17" y="585" font-family="Liberation Sans" font-size="16" fill="#333" text-anchor="middle" >13</text>
<text x="17" y="611" font-family="Liberation Sans" font-size="16" fill="#333" text-anchor="middle" >14</text>
<text x="17" y="637" font-family="Liberation Sans" font-size="16" fill="#333" text-anchor="middle" >15</text>
<text x="17" y="663" font-family="Liberation Sans" font-size="16" fill="#333" text-anchor="middle" >16</text>
<text x="75.5" y="260.2" font-family="Liberation Sans" font-size="16" fill="#000" font-weight="bold" text-anchor="middle" >Product</text>
<text x="158.5" y="260.2" font-family="Liberation Sans" font-size="16" fill="#000" font-weight="bold" text-anchor="middle" >Region</text>
<text x="241.5" y="260.2" font-family="Liberation Sans" font-size="16" fill="#000" font-weight="bold" text-anchor="middle" >Sales Rep</text>
<text x="324.5" y="260.2" font-family="Liberation Sans" font-size="16" fill="#000" font-weight="bold" text-anchor="middle" >Orders</text>
<text x="38.2" y="298.7" font-family="Liberation Sans" font-size="17" fill="#000" textLength="43.8" lengthAdjust="spacingAndGlyphs" >Apple</text>
<text x="121.2" y="298.7" font-family="Liberation Sans" font-size="17" fill="#000" textLength="31.4" lengthAdjust="spacingAndGlyphs" >East</text>
<text x="204.2" y="298.7" font-family="Liberation Sans" font-size="17" fill="#000" textLength="36" lengthAdjust="spacingAndGlyphs" >John</text>
<text x="362.9" y="298.7" font-family="Liberation Sans" font-size="17" fill="#000" text-anchor="end" textLength="19.2" lengthAdjust="spacingAndGlyphs" >50</text>
<text x="38.2" y="324.7" font-family="Liberation Sans" font-size="17" fill="#000" textLength="56.5" lengthAdjust="spacingAndGlyphs" >Banana</text>
<text x="121.2" y="324.7" font-family="Liberation Sans" font-size="17" fill="#000" textLength="39.7" lengthAdjust="spacingAndGlyphs" >West</text>
<text x="204.2" y="324.7" font-family="Liberation Sans" font-size="17" fill="#000" textLength="43.4" lengthAdjust="spacingAndGlyphs" >Sarah</text>
<text x="38.2" y="350.7" font-family="Liberation Sans" font-size="17" fill="#000" textLength="43.8" lengthAdjust="spacingAndGlyphs" >Apple</text>
<text x="121.2" y="350.7" font-family="Liberation Sans" font-size="17" fill="#000" textLength="31.4" lengthAdjust="spacingAndGlyphs" >East</text>
<text x="204.2" y="350.7" font-family="Liberation Sans" font-size="17" fill="#000" textLength="37.3" lengthAdjust="spacingAndGlyphs" >Mike</text>
<text x="362.9" y="350.7" font-family="Liberation Sans" font-size="17" fill="#000" text-anchor="end" textLength="19.2" lengthAdjust="spacingAndGlyphs" >40</text>
<text x="38.2" y="376.7" font-family="Liberation Sans" font-size="17" fill="#000" textLength="56.5" lengthAdjust="spacingAndGlyphs" >Banana</text>
<text x="121.2" y="376.7" font-family="Liberation Sans" font-size="17" fill="#000" textLength="31.4" lengthAdjust="spacingAndGlyphs" >East</text>
<text x="204.2" y="376.7" font-family="Liberation Sans" font-size="17" fill="#000" textLength="36" lengthAdjust="spacingAndGlyphs" >John</text>
<text x="362.9" y="376.7" font-family="Liberation Sans" font-size="17" fill="#000" text-anchor="end" textLength="19.2" lengthAdjust="spacingAndGlyphs" >60</text>
<path d="M430,427 L374,389" fill="none" stroke="#29b1e1" stroke-width="3.6" stroke-linecap="round"/>
<path d="M385.5,388.2 L372.8,387.3 L377,399" fill="none" stroke="#29b1e1" stroke-width="3.6" stroke-linecap="round" stroke-linejoin="round"/>
<circle cx="459.5" cy="447.6" r="37.8" fill="#29b1e1"/>
<path d="M457.6,435.9 H465.1 V460 H457.6 Z M452.9,435.9 H458 V441.5 H452.9 Z" fill="#0c0c0c" />
</svg></body></html>
